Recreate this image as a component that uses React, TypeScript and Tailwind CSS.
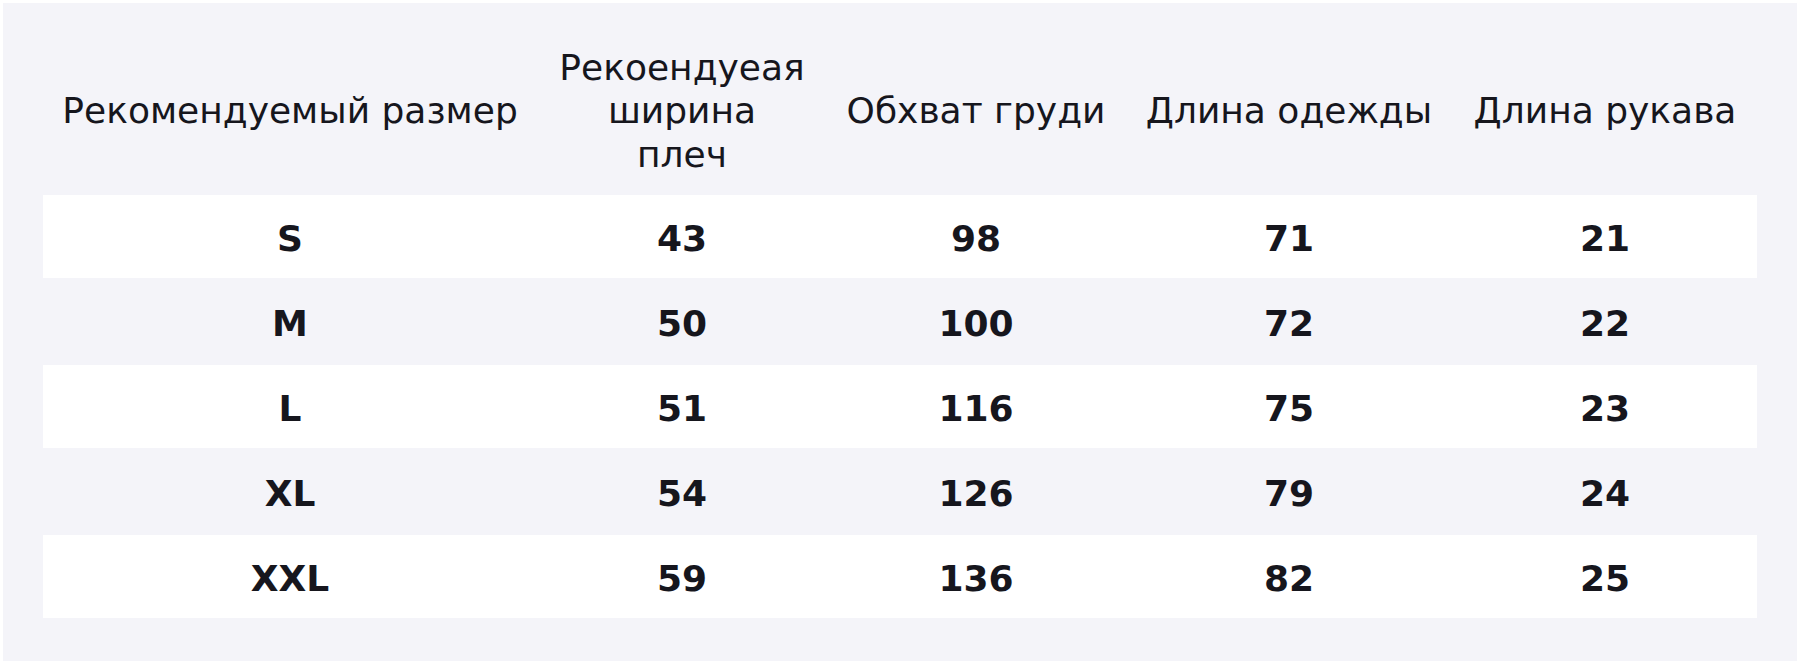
const headers = [
  "Рекомендуемый размер",
  "Рекоендуеая ширина плеч",
  "Обхват груди",
  "Длина одежды",
  "Длина рукава",
];

const rows = [
  ["S", "43", "98", "71", "21"],
  ["M", "50", "100", "72", "22"],
  ["L", "51", "116", "75", "23"],
  ["XL", "54", "126", "79", "24"],
  ["XXL", "59", "136", "82", "25"],
];

const cols = "grid grid-cols-[494px_290px_298px_328px_304px]";

export default function App() {
  return (
    <div className="h-[664px] w-[1800px] bg-white p-[3px] font-['DejaVu_Sans',sans-serif] text-[#16161d]">
      <div className="h-[658px] bg-[#f4f4f9] p-10">
        <div className={`${cols} h-[152px] pt-[2px] pb-[18px] text-[36px] leading-[1.2]`}>
          {headers.map((h) => (
            <div
              key={h}
              className="flex items-center justify-center px-5 text-center"
            >
              {h === headers[1] ? (
                <span className="w-min">{h}</span>
              ) : (
                <span className="whitespace-nowrap">{h}</span>
              )}
            </div>
          ))}
        </div>
        <div className="flex flex-col">
          {rows.map((r, i) => (
            <div
              key={r[0]}
              className={`${cols} text-[36px] font-bold leading-[1.2] ${
                i % 2 === 0 ? "h-[83px] bg-white" : "h-[87px] bg-[#f4f4f9]"
              }`}
            >
              {r.map((c, j) => (
                <div key={j} className="flex items-center justify-center pt-1">
                  {c}
                </div>
              ))}
            </div>
          ))}
        </div>
      </div>
    </div>
  );
}
